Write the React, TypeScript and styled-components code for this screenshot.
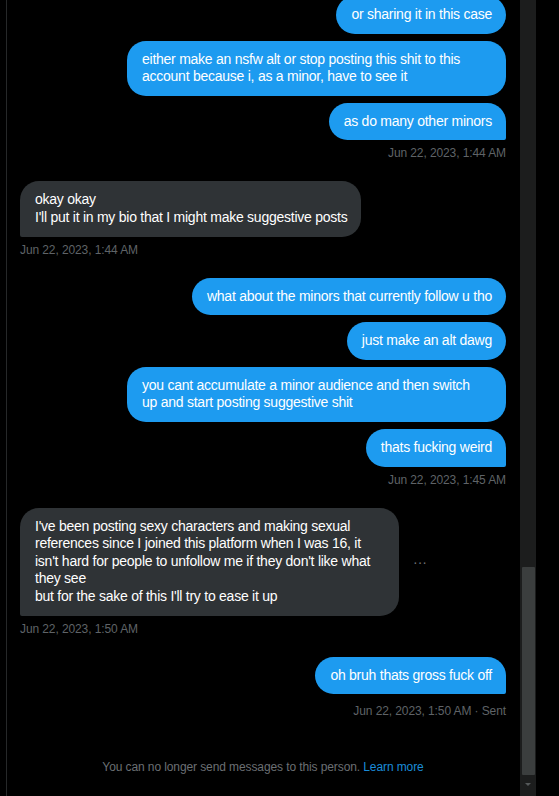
import styled, { createGlobalStyle } from "styled-components";

const GlobalStyle = createGlobalStyle`
  html, body {
    margin: 0;
    padding: 0;
    background: #000;
  }
  body {
    font-family: "Liberation Sans", Arial, sans-serif;
    overflow: hidden;
  }
`;

type Msg = { text: string; wide?: boolean };
type Group = { side: "sent" | "received"; msgs: Msg[]; time: string };

const groups: Group[] = [
  {
    side: "sent",
    msgs: [
      { text: "or sharing it in this case" },
      {
        text: "either make an nsfw alt or stop posting this shit to this\naccount because i, as a minor, have to see it",
        wide: true,
      },
      { text: "as do many other minors" },
    ],
    time: "Jun 22, 2023, 1:44 AM",
  },
  {
    side: "received",
    msgs: [{ text: "okay okay\nI'll put it in my bio that I might make suggestive posts" }],
    time: "Jun 22, 2023, 1:44 AM",
  },
  {
    side: "sent",
    msgs: [
      { text: "what about the minors that currently follow u tho" },
      { text: "just make an alt dawg" },
      {
        text: "you cant accumulate a minor audience and then switch\nup and start posting suggestive shit",
        wide: true,
      },
      { text: "thats fucking weird" },
    ],
    time: "Jun 22, 2023, 1:45 AM",
  },
  {
    side: "received",
    msgs: [
      {
        text: "I've been posting sexy characters and making sexual\nreferences since I joined this platform when I was 16, it\nisn't hard for people to unfollow me if they don't like what\nthey see\nbut for the sake of this I'll try to ease it up",
        wide: true,
      },
    ],
    time: "Jun 22, 2023, 1:50 AM",
  },
  {
    side: "sent",
    msgs: [{ text: "oh bruh thats gross fuck off" }],
    time: "Jun 22, 2023, 1:50 AM · Sent",
  },
];

export default function App() {
  return (
    <>
      <GlobalStyle />
      <Screen>
        <EdgeLine />
        <Pane>
          <MessageList>
            {groups.map((g, gi) => (
              <MessageGroup key={gi} $side={g.side}>
                {g.msgs.map((m, mi) => {
                  const last = mi === g.msgs.length - 1;
                  const bubble = (
                    <Bubble key={mi} $side={g.side} $last={last} $wide={m.wide}>
                      {m.text}
                    </Bubble>
                  );
                  // hover menu shows beside the long received message
                  if (g.side === "received" && gi === 3) {
                    return (
                      <BubbleRow key={mi}>
                        {bubble}
                        <MoreDots>···</MoreDots>
                      </BubbleRow>
                    );
                  }
                  return bubble;
                })}
                <Timestamp $sent={g.time.includes("Sent")}>{g.time}</Timestamp>
              </MessageGroup>
            ))}
          </MessageList>
          <Footer>
            You can no longer send messages to this person. <LearnMore>Learn more</LearnMore>
          </Footer>
        </Pane>
        <Scrollbar>
          <ThumbSpacer />
          <Thumb />
          <ArrowDown />
        </Scrollbar>
        <RightGutter />
      </Screen>
    </>
  );
}

const Screen = styled.div`
  display: flex;
  width: 559px;
  height: 796px;
  overflow: hidden;
  background: #000;
`;

const EdgeLine = styled.div`
  width: 1px;
  margin-left: 6px;
  background: #262829;
  flex-shrink: 0;
`;

const Pane = styled.div`
  flex: 1;
  display: flex;
  flex-direction: column;
  padding: 0 14px 0 13px;
  min-width: 0;
`;

const MessageList = styled.div`
  display: flex;
  flex-direction: column;
  gap: 20px;
  margin-top: -4px;
`;

const MessageGroup = styled.div<{ $side: "sent" | "received" }>`
  display: flex;
  flex-direction: column;
  align-items: ${(p) => (p.$side === "sent" ? "flex-end" : "flex-start")};
  gap: 7px;
`;

const BubbleRow = styled.div`
  display: flex;
  align-items: center;
  gap: 14px;
`;

const Bubble = styled.div<{ $side: "sent" | "received"; $last: boolean; $wide?: boolean }>`
  box-sizing: border-box;
  max-width: 379px;
  width: ${(p) => (p.$wide ? "379px" : "auto")};
  padding: 10px 14px 10px 15px;
  font-size: 14px;
  line-height: 17.6px;
  letter-spacing: -0.25px;
  color: #fff;
  white-space: pre-line;
  background: ${(p) => (p.$side === "sent" ? "#1d9bf0" : "#2f3336")};
  border-radius: 19px;
  ${(p) =>
    p.$last && p.$side === "sent" ? "border-bottom-right-radius: 2px;" : ""}
  ${(p) =>
    p.$last && p.$side === "received" ? "border-bottom-left-radius: 2px;" : ""}
`;

const MoreDots = styled.span`
  color: #6e7175;
  font-size: 14px;
`;

const Timestamp = styled.div<{ $sent?: boolean }>`
  margin-top: ${(p) => (p.$sent ? "2px" : "-2px")};
  font-size: 12px;
  line-height: 16px;
  color: #5f6367;
  letter-spacing: -0.1px;
`;

const Footer = styled.div`
  margin-top: 40px;
  text-align: center;
  font-size: 12px;
  line-height: 16px;
  color: #6b6f73;
  letter-spacing: -0.1px;
`;

const LearnMore = styled.span`
  color: #1a8cd8;
`;

const Scrollbar = styled.div`
  width: 16px;
  flex-shrink: 0;
  background: #1c1d1d;
  display: flex;
  flex-direction: column;
  align-items: center;
`;

const ThumbSpacer = styled.div`
  height: 567px;
`;

const Thumb = styled.div`
  width: 13px;
  height: 208px;
  background: #3b3e3e;
  border-radius: 1px;
`;

const ArrowDown = styled.div`
  margin-top: 8px;
  width: 0;
  height: 0;
  border-left: 3px solid transparent;
  border-right: 3px solid transparent;
  border-top: 3px solid #55595a;
`;

const RightGutter = styled.div`
  width: 23px;
  flex-shrink: 0;
`;
